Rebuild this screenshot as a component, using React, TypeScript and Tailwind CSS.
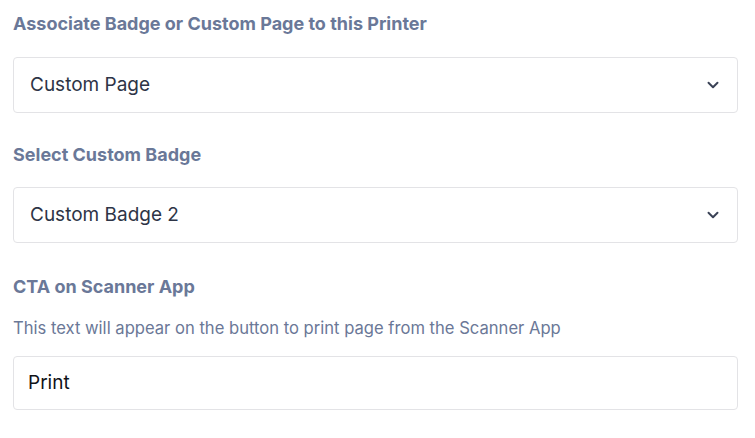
import { ChevronDown } from "lucide-react";

const labelClass =
  "block text-[18px] font-bold leading-6 text-[#6a7898]";

const boxClass =
  "flex w-full items-center rounded-[4px] border border-[#e3e3e6] bg-white";

function SelectBox({ value }: { value: string }) {
  return (
    <div className={`${boxClass} h-[56px] justify-between pl-[16px] pr-[15px]`}>
      <span className="text-[19px] text-[#2d3446]">{value}</span>
      <ChevronDown size={18} strokeWidth={2.6} className="text-[#3a4256]" />
    </div>
  );
}

export default function App() {
  return (
    <div
      className="min-h-screen bg-white pl-[13px] pr-[17px] pt-[12px]"
      style={{ fontFamily: "Inter, 'Noto Sans', sans-serif" }}
    >
      <label className={labelClass}>
        Associate Badge or Custom Page to this Printer
      </label>
      <div className="mt-[21px]">
        <SelectBox value="Custom Page" />
      </div>

      <label className={`${labelClass} mt-[30px]`}>Select Custom Badge</label>
      <div className="mt-[20px]">
        <SelectBox value="Custom Badge 2" />
      </div>

      <label className={`${labelClass} mt-[32px]`}>CTA on Scanner App</label>
      <p className="mt-[17px] text-[16.6px] leading-6 text-[#6b7897]">
        This text will appear on the button to print page from the Scanner App
      </p>
      <div className={`${boxClass} mt-[16px] h-[54px] pl-[14px]`}>
        <span className="text-[19px] text-[#111318]">Print</span>
      </div>
    </div>
  );
}
